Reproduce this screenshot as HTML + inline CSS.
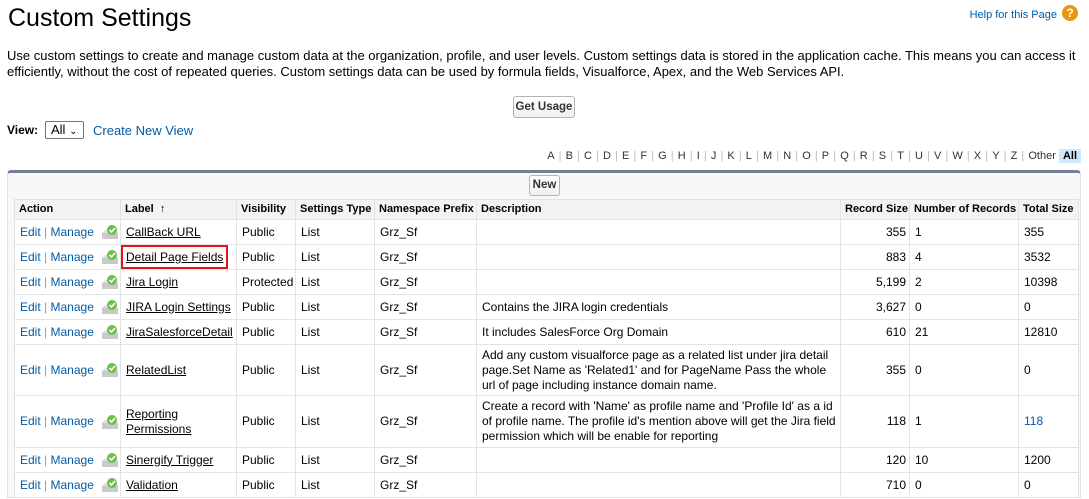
<!DOCTYPE html>
<html><head><meta charset="utf-8"><style>
*{box-sizing:border-box}
body{margin:0;width:1089px;height:499px;overflow:hidden;background:#fff;font-family:"Liberation Sans",Arial,sans-serif;font-size:13px;color:#000;position:relative}
a{color:#015ba7;text-decoration:none}
.abs{position:absolute;white-space:nowrap}
h1{position:absolute;left:8px;top:4px;margin:0;font-weight:normal;font-size:25px;color:#000}
.desc{position:absolute;left:7px;top:48px;width:1080px;font-size:13px;line-height:16px;color:#000}
.btn{position:absolute;border:1px solid #b5b5b5;border-radius:3px;background:linear-gradient(#fff,#f0f0f0);font-weight:bold;font-size:11.5px;color:#333;text-align:center}
.box{position:absolute;left:7px;top:170px;width:1074px;height:328px;background:#f8f8f8;border:1px solid #e0e3e5;border-top:3px solid #747e96;border-radius:4px 4px 0 0}
table{position:absolute;left:14px;top:199px;width:1064px;border-collapse:collapse;table-layout:fixed;background:#fff}
td,th{border:1px solid #e3e3e3;padding:0 0 0 5px;vertical-align:middle;text-align:left;line-height:15px;white-space:nowrap;overflow:hidden;font-size:12px}
td.d{white-space:normal;padding-right:3px}
th{background:#f2f3f3;font-size:11px;font-weight:bold;height:20px;color:#000;padding-left:4px}
td.r{text-align:right;padding-right:3px}
td .u{color:#000;text-decoration:underline}
.ic{display:inline-block;width:16px;height:14px;vertical-align:middle;margin-left:8px}
.alpha{position:absolute;right:8px;top:150px;font-size:11px;color:#333}
.alpha span.sep{color:#bbb;margin:0 4.1px}
</style></head><body>
<h1>Custom Settings</h1>
<div class="abs" style="right:32px;top:9px;font-size:11px;"><a>Help for this Page</a></div>
<div class="abs" style="left:1062px;top:5px;width:16px;height:16px;border-radius:50%;background:#e8960e;color:#fff;font-weight:bold;font-size:12px;text-align:center;line-height:16px">?</div>
<div class="desc">Use custom settings to create and manage custom data at the organization, profile, and user levels. Custom settings data is stored in the application cache. This means you can access it efficiently, without the cost of repeated queries. Custom settings data can be used by formula fields, Visualforce, Apex, and the Web Services API.</div>
<div class="btn" style="left:513px;top:96px;width:62px;height:22px;line-height:20px">Get Usage</div>
<div class="abs" style="left:7px;top:123px;font-weight:bold;font-size:12px">View:</div>
<div class="abs" style="left:45px;top:121px;width:39px;height:18px;border:1px solid #767676;border-radius:2px;font-size:13px;padding-left:5px;line-height:16px">All <span style="font-size:10px">&#x2304;</span></div>
<div class="abs" style="left:93px;top:123px"><a>Create New View</a></div>
<div class="alpha">A<span class="sep">|</span>B<span class="sep">|</span>C<span class="sep">|</span>D<span class="sep">|</span>E<span class="sep">|</span>F<span class="sep">|</span>G<span class="sep">|</span>H<span class="sep">|</span>I<span class="sep">|</span>J<span class="sep">|</span>K<span class="sep">|</span>L<span class="sep">|</span>M<span class="sep">|</span>N<span class="sep">|</span>O<span class="sep">|</span>P<span class="sep">|</span>Q<span class="sep">|</span>R<span class="sep">|</span>S<span class="sep">|</span>T<span class="sep">|</span>U<span class="sep">|</span>V<span class="sep">|</span>W<span class="sep">|</span>X<span class="sep">|</span>Y<span class="sep">|</span>Z<span class="sep">|</span>Other <span style="background:#cfe6fb;font-weight:bold;padding:1px 4px;color:#000">All</span></div>
<div class="box"></div>
<div class="btn" style="left:529px;top:175px;width:31px;height:21px;line-height:19px">New</div>
<svg width="0" height="0" style="position:absolute"><defs><symbol id="i" viewBox="0 0 16 14"><path d="M0 8h16v6H0z" fill="#c9c9c9"/><path d="M0 8l3-3h10l3 3z" fill="#e0e0e0"/><circle cx="10" cy="5" r="5" fill="#6cbf4a"/><path d="M7.5 5l2 2 3.5-4" stroke="#fff" stroke-width="1.6" fill="none"/></symbol></defs></svg>
<table>
<colgroup><col style="width:106px"><col style="width:116px"><col style="width:59px"><col style="width:79px"><col style="width:102px"><col style="width:364px"><col style="width:69px"><col style="width:109px"><col style="width:60px"></colgroup>
<tr><th>Action</th><th>Label &nbsp;&#8593;</th><th>Visibility</th><th>Settings Type</th><th>Namespace Prefix</th><th>Description</th><th>Record Size</th><th>Number of Records</th><th>Total Size</th></tr>
<tr style="height:25px"><td><a>Edit</a> <span style="color:#999">|</span> <a>Manage</a><svg class="ic"><use href="#i"/></svg></td><td><span class="u">CallBack URL</span></td><td>Public</td><td>List</td><td>Grz_Sf</td><td></td><td class="r">355</td><td>1</td><td>355</td></tr>
<tr style="height:25px"><td><a>Edit</a> <span style="color:#999">|</span> <a>Manage</a><svg class="ic"><use href="#i"/></svg></td><td style="overflow:visible"><span class="u" style="outline:2px solid #e8141c;outline-offset:3px">Detail Page Fields</span></td><td>Public</td><td>List</td><td>Grz_Sf</td><td></td><td class="r">883</td><td>4</td><td>3532</td></tr>
<tr style="height:25px"><td><a>Edit</a> <span style="color:#999">|</span> <a>Manage</a><svg class="ic"><use href="#i"/></svg></td><td><span class="u">Jira Login</span></td><td>Protected</td><td>List</td><td>Grz_Sf</td><td></td><td class="r">5,199</td><td>2</td><td>10398</td></tr>
<tr style="height:25px"><td><a>Edit</a> <span style="color:#999">|</span> <a>Manage</a><svg class="ic"><use href="#i"/></svg></td><td><span class="u">JIRA Login Settings</span></td><td>Public</td><td>List</td><td>Grz_Sf</td><td>Contains the JIRA login credentials</td><td class="r">3,627</td><td>0</td><td>0</td></tr>
<tr style="height:25px"><td><a>Edit</a> <span style="color:#999">|</span> <a>Manage</a><svg class="ic"><use href="#i"/></svg></td><td><span class="u">JiraSalesforceDetail</span></td><td>Public</td><td>List</td><td>Grz_Sf</td><td>It includes SalesForce Org Domain</td><td class="r">610</td><td>21</td><td>12810</td></tr>
<tr style="height:51px"><td><a>Edit</a> <span style="color:#999">|</span> <a>Manage</a><svg class="ic"><use href="#i"/></svg></td><td><span class="u">RelatedList</span></td><td>Public</td><td>List</td><td>Grz_Sf</td><td class="d">Add any custom visualforce page as a related list under jira detail page.Set Name as 'Related1' and for PageName Pass the whole url of page including instance domain name.</td><td class="r">355</td><td>0</td><td>0</td></tr>
<tr style="height:52px"><td><a>Edit</a> <span style="color:#999">|</span> <a>Manage</a><svg class="ic"><use href="#i"/></svg></td><td class="d"><span class="u">Reporting Permissions</span></td><td>Public</td><td>List</td><td>Grz_Sf</td><td class="d">Create a record with 'Name' as profile name and 'Profile Id' as a id of profile name. The profile id's mention above will get the Jira field permission which will be enable for reporting</td><td class="r">118</td><td>1</td><td style="color:#015ba7">118</td></tr>
<tr style="height:25px"><td><a>Edit</a> <span style="color:#999">|</span> <a>Manage</a><svg class="ic"><use href="#i"/></svg></td><td><span class="u">Sinergify Trigger</span></td><td>Public</td><td>List</td><td>Grz_Sf</td><td></td><td class="r">120</td><td>10</td><td>1200</td></tr>
<tr style="height:25px"><td><a>Edit</a> <span style="color:#999">|</span> <a>Manage</a><svg class="ic"><use href="#i"/></svg></td><td><span class="u">Validation</span></td><td>Public</td><td>List</td><td>Grz_Sf</td><td></td><td class="r">710</td><td>0</td><td>0</td></tr>
</table>
</body></html>
